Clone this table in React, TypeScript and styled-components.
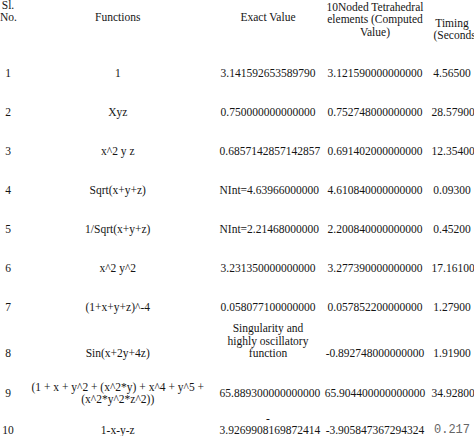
import React from "react";
import styled, { createGlobalStyle } from "styled-components";

const GlobalStyle = createGlobalStyle`
  html, body {
    margin: 0;
    padding: 0;
    background: #ffffff;
    overflow: hidden;
  }
`;

const Table = styled.table`
  table-layout: fixed;
  width: 474.5px;
  margin: -1.5px 0 0 -2px;
  border-collapse: collapse;
  border-spacing: 0;
  font-family: "Liberation Serif", "Times New Roman", serif;
  font-size: 11.5px;
  line-height: 12.5px;
  color: #151515;
`;

const HeadRow = styled.tr`
  height: 55px;
`;

const HeadCell = styled.th<{ $top: number }>`
  font-weight: normal;
  text-align: center;
  vertical-align: top;
  padding: ${(p) => p.$top}px 2px 0;
`;

const Row = styled.tr<{ $top: number; $bottom: number; $valign: string }>`
  & > td {
    padding: ${(p) => p.$top}px 2px ${(p) => p.$bottom}px;
    vertical-align: ${(p) => p.$valign};
  }
`;

const Cell = styled.td`
  text-align: center;
  white-space: pre-line;
`;

const TimeCell = styled(Cell)`
  && {
    padding-left: 0;
    padding-right: 0;
  }
`;

const MonoValue = styled.span`
  font-family: "Liberation Mono", "Courier New", monospace;
  font-size: 12px;
  line-height: 12.5px;
  color: #666666;
`;

type Result = {
  no: string;
  fn: string;
  exact: string;
  computed: string;
  time: string;
  mono?: boolean;
  top: number;
  bottom: number;
  valign: "middle" | "bottom";
};

const results: Result[] = [
  { no: "1", fn: "1", exact: "3.141592653589790", computed: "3.121590000000000", time: "4.56500", top: 13.25, bottom: 13.25, valign: "middle" },
  { no: "2", fn: "Xyz", exact: "0.750000000000000", computed: "0.752748000000000", time: "28.57900", top: 13.25, bottom: 13.25, valign: "middle" },
  { no: "3", fn: "x^2 y z", exact: "0.6857142857142857", computed: "0.691402000000000", time: "12.35400", top: 13.25, bottom: 13.25, valign: "middle" },
  { no: "4", fn: "Sqrt(x+y+z)", exact: "NInt=4.63966000000", computed: "4.610840000000000", time: "0.09300", top: 13.25, bottom: 13.25, valign: "middle" },
  { no: "5", fn: "1/Sqrt(x+y+z)", exact: "NInt=2.21468000000", computed: "2.200840000000000", time: "0.45200", top: 13.25, bottom: 13.25, valign: "middle" },
  { no: "6", fn: "x^2 y^2", exact: "3.231350000000000", computed: "3.277390000000000", time: "17.16100", top: 13.25, bottom: 13.25, valign: "middle" },
  { no: "7", fn: "(1+x+y+z)^-4", exact: "0.058077100000000", computed: "0.057852200000000", time: "1.27900", top: 13.25, bottom: 7, valign: "middle" },
  { no: "8", fn: "Sin(x+2y+4z)", exact: "Singularity and highly oscillatory function", computed: "-0.892748000000000", time: "1.91900", top: 2, bottom: 0, valign: "bottom" },
  { no: "9", fn: "(1 + x + y^2 + (x^2*y) + x^4 + y^5 + (x^2*y^2*z^2))", exact: "65.889300000000000", computed: "65.904400000000000", time: "34.92800", top: 21, bottom: 0, valign: "middle" },
  { no: "10", fn: "1-x-y-z", exact: "-\n3.9269908169872414", computed: "-3.905847367294324", time: "0.217", mono: true, top: 6, bottom: 0, valign: "bottom" },
];

const App: React.FC = () => {
  return (
    <>
      <GlobalStyle />
      <Table>
        <colgroup>
          <col style={{ width: 20 }} />
          <col style={{ width: 199.5 }} />
          <col style={{ width: 101 }} />
          <col style={{ width: 113 }} />
          <col style={{ width: 41 }} />
        </colgroup>
        <thead>
          <HeadRow>
            <HeadCell $top={0}>Sl. No.</HeadCell>
            <HeadCell $top={12}>Functions</HeadCell>
            <HeadCell $top={12}>Exact Value</HeadCell>
            <HeadCell $top={2}>10Noded Tetrahedral elements (Computed Value)</HeadCell>
            <HeadCell $top={18}>Timing (Seconds)</HeadCell>
          </HeadRow>
        </thead>
        <tbody>
          {results.map((r) => (
            <Row key={"Result" + r.no} $top={r.top} $bottom={r.bottom} $valign={r.valign}>
              <Cell>{r.no}</Cell>
              <Cell>{r.fn}</Cell>
              <Cell>{r.exact}</Cell>
              <Cell>{r.computed}</Cell>
              <TimeCell>{r.mono ? <MonoValue>{r.time}</MonoValue> : r.time}</TimeCell>
            </Row>
          ))}
        </tbody>
      </Table>
    </>
  );
};

export default App;
